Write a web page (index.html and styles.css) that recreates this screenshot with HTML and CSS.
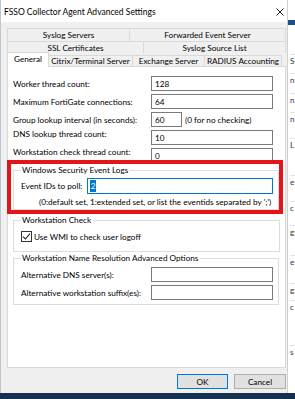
FILE: index.html
```html
<!DOCTYPE html>
<html>
<head>
<meta charset="utf-8">
<link rel="stylesheet" href="styles.css">
</head>
<body>
<div class="desktop">
  <div class="edge"></div>
  <div class="dialog">
    <div class="titlebar">
      <span class="title">FSSO Collector Agent Advanced Settings</span>
      <svg class="close" width="8" height="8" viewBox="0 0 8 8"><path d="M0.5 0.5 L7.5 7.5 M7.5 0.5 L0.5 7.5" stroke="#222" stroke-width="1" fill="none"/></svg>
    </div>
    <div class="body">
      <div class="tabs">
        <div class="tabrow r1">
          <div class="tab w122">Syslog Servers</div>
          <div class="tab w157 last">Forwarded Event Server</div>
        </div>
        <div class="tabrow r2">
          <div class="tab w136">SSL Certificates</div>
          <div class="tab w143 last">Syslog Source List</div>
        </div>
        <div class="tabrow r3">
          <div class="tab sel w42">General</div>
          <div class="tab w84">Citrix/Terminal Server</div>
          <div class="tab w72">Exchange Server</div>
          <div class="tab w78 last">RADIUS Accounting</div>
        </div>
      </div>
      <div class="panel">
        <div class="form">
          <div class="lbl">Worker thread count:</div>
          <div class="box">128</div>
          <div class="lbl">Maximum FortiGate connections:</div>
          <div class="box">64</div>
          <div class="lbl">Group lookup interval (in seconds):</div>
          <div class="pair"><div class="box small">60</div><span class="note">(0 for no checking)</span></div>
          <div class="lbl up">DNS lookup thread count:</div>
          <div class="box">10</div>
          <div class="lbl up">Workstation check thread count:</div>
          <div class="box">0</div>
        </div>
        <div class="annot">
          <fieldset class="group g-events">
            <legend>Windows Security Event Logs</legend>
            <div class="eventrow">
              <span class="evlbl">Event IDs to poll:</span>
              <div class="box focus"><span class="selected">2</span></div>
            </div>
            <div class="hint">(0:default set, 1:extended set, or list the eventids separated by ';')</div>
          </fieldset>
        </div>
        <fieldset class="group g-check">
          <legend>Workstation Check</legend>
          <div class="checkrow">
            <span class="checkbox"><svg width="9" height="9" viewBox="0 0 9 9"><path d="M1 4.6 L3.4 7 L8 1.6" stroke="#222" stroke-width="1.1" fill="none"/></svg></span>
            <span>Use WMI to check user logoff</span>
          </div>
        </fieldset>
        <fieldset class="group g-name">
          <legend>Workstation Name Resolution Advanced Options</legend>
          <div class="form2">
            <div class="lbl">Alternative DNS server(s):</div>
            <div class="box"></div>
            <div class="lbl">Alternative workstation suffix(es):</div>
            <div class="box"></div>
          </div>
        </fieldset>
      </div>
      <div class="buttons">
        <div class="btn default">OK</div>
        <div class="btn cancel">Cancel</div>
      </div>
    </div>
  </div>
  <div class="bgwin">
    <div class="bgtop"></div>
    <div class="bgbar"></div>
    <div class="frag f1">S</div>
    <div class="frag f2">n</div>
    <div class="frag f3">n</div>
    <div class="frag f4">n</div>
    <div class="frag f5">L</div>
    <div class="frag f6">e</div>
    <div class="frag f7">c</div>
    <div class="frag f8">g</div>
    <div class="frag f9">e</div>
    <div class="frag f10">g</div>
    <div class="frag f11">c</div>
    <div class="frag f12">s</div>
  </div>
  <div class="taskbar"></div>
</div>
</body>
</html>
```
FILE: styles.css
```css
* { box-sizing: border-box; }
html, body { margin: 0; padding: 0; }
body {
  font-family: Lato, "Liberation Sans", Arial, sans-serif;
  font-size: 8.2px;
  line-height: 12px;
  color: #000;
  background: #fff;
  overflow: hidden;
}
.desktop {
  display: grid;
  grid-template-columns: 1px 286px 8px;
  grid-template-rows: 393px 6px;
  width: 295px;
  height: 399px;
}
.edge { background: #b9c6d3; }
.dialog {
  display: flex;
  flex-direction: column;
  background: #f0f0f0;
}
.titlebar {
  height: 22px;
  background: #fff;
  display: flex;
  align-items: center;
  justify-content: space-between;
  padding: 1px 3px 0 3px;
}
.title { font-size: 8.5px; }
.close { display: block; }
.body {
  flex: 1;
  display: flex;
  flex-direction: column;
  padding: 6px 1px 4px 6px;
}
.tabs { display: flex; flex-direction: column; }
.tabrow { display: flex; }
.r1 { height: 13px; }
.r2 { height: 12px; }
.r3 { height: 13px; align-items: flex-end; }
.tab {
  height: 100%;
  border: 1px solid #d9d9d9;
  border-right: none;
  border-bottom: none;
  background: #f0f0f0;
  display: flex;
  align-items: center;
  justify-content: center;
  white-space: nowrap;
}
.tab.last { border-right: 1px solid #d9d9d9; }
.r3 .tab { height: 11px; }
.r3 .tab.sel {
  position: relative;
  z-index: 1;
  height: 15px;
  margin-bottom: -1px;
  background: #fff;
  border-right: 1px solid #d9d9d9;
  margin-right: -1px;
  padding-bottom: 2px;
}
.w122 { width: 122px; }
.w157 { width: 157px; }
.w136 { width: 136px; }
.w143 { width: 143px; }
.w42 { width: 42px; }
.w84 { width: 84px; }
.w72 { width: 72px; }
.w78 { width: 78px; }
.panel {
  height: 302px;
  background: #fff;
  border: 1px solid #d9d9d9;
  padding: 9px 6px 0 5px;
}
.form {
  display: grid;
  grid-template-columns: 138px 122px;
  grid-auto-rows: 15px;
  row-gap: 3px;
}
.lbl {
  display: flex;
  align-items: center;
  white-space: nowrap;
}
.lbl.up { align-self: start; line-height: 15px; margin-top: -3px; }
.box {
  height: 15px;
  border: 1px solid #7a7a7a;
  background: #fff;
  padding-left: 3px;
  display: flex;
  align-items: center;
}
.pair { display: flex; align-items: center; }
.box.small { width: 31px; }
.note { margin-left: 3px; white-space: nowrap; }
.annot {
  position: relative;
  width: 276px;
  margin: -3px 0 0 -6px;
  border: 4px solid #e3151b;
  padding-left: 2px;
}
fieldset.group {
  margin: 0;
  min-width: 0;
  border: 1px solid #dcdcdc;
}
fieldset.group legend {
  padding: 0 2px 0 1px;
  line-height: 12px;
  white-space: nowrap;
}
.g-events {
  width: 266px;
  border-bottom: none;
  padding: 2px 0 1px 7px;
}
.eventrow { display: flex; align-items: center; height: 16px; }
.evlbl { width: 66px; white-space: nowrap; }
.box.focus {
  width: 186px;
  height: 16px;
  border-color: #0078d7;
  padding-left: 2px;
}
.selected {
  display: inline-block;
  background: #0078d7;
  color: #fff;
  width: 6px;
  height: 12px;
  line-height: 12px;
  text-align: center;
}
.hint { margin: 2px 0 0 18px; white-space: nowrap; }
.g-check {
  width: 267px;
  margin-top: 9px;
  padding: 5px 0 9px 7px;
}
.checkrow { display: flex; align-items: center; height: 11px; }
.checkbox {
  width: 11px;
  height: 11px;
  border: 1px solid #333;
  background: #fff;
  margin-right: 2px;
  display: flex;
  align-items: center;
  justify-content: center;
}
.checkbox svg { display: block; }
.g-name {
  width: 266px;
  margin-top: 7px;
  padding: 3px 0 4px 7px;
}
.form2 {
  display: grid;
  grid-template-columns: 130px 122px;
  grid-auto-rows: 15px;
  row-gap: 3px;
}
.buttons {
  display: flex;
  justify-content: flex-end;
  gap: 6px;
  margin-top: 6px;
}
.btn {
  height: 15px;
  border: 1px solid #adadad;
  background: #e1e1e1;
  display: flex;
  align-items: center;
  justify-content: center;
}
.btn.default { width: 51px; border-color: #0078d7; }
.btn.cancel { width: 52px; }
.bgwin {
  background: #fff;
  border-left: 1px solid #d0d0d0;
  display: flex;
  flex-direction: column;
  overflow: hidden;
  color: #333;
  padding-left: 2px;
}
.bgtop { height: 20px; flex: none; }
.bgbar { height: 5px; background: #1d4f8a; margin-left: -3px; flex: none; }
.frag { height: 12px; line-height: 12px; flex: none; border-top: 1px solid #e4e4e4; }
.f1 { margin-top: 29px; }
.f2 { margin-top: 7px; }
.f3 { margin-top: 8px; }
.f4 { margin-top: 7px; }
.f5 { margin-top: 14px; }
.f6 { margin-top: 25px; }
.f7 { margin-top: 14px; }
.f8 { margin-top: 12px; }
.f9 { margin-top: 18px; }
.f10 { margin-top: 16px; }
.f11 { margin-top: 5px; }
.f12 { margin-top: 33px; }
.taskbar { grid-column: 1 / -1; background: #16304f; }
```
